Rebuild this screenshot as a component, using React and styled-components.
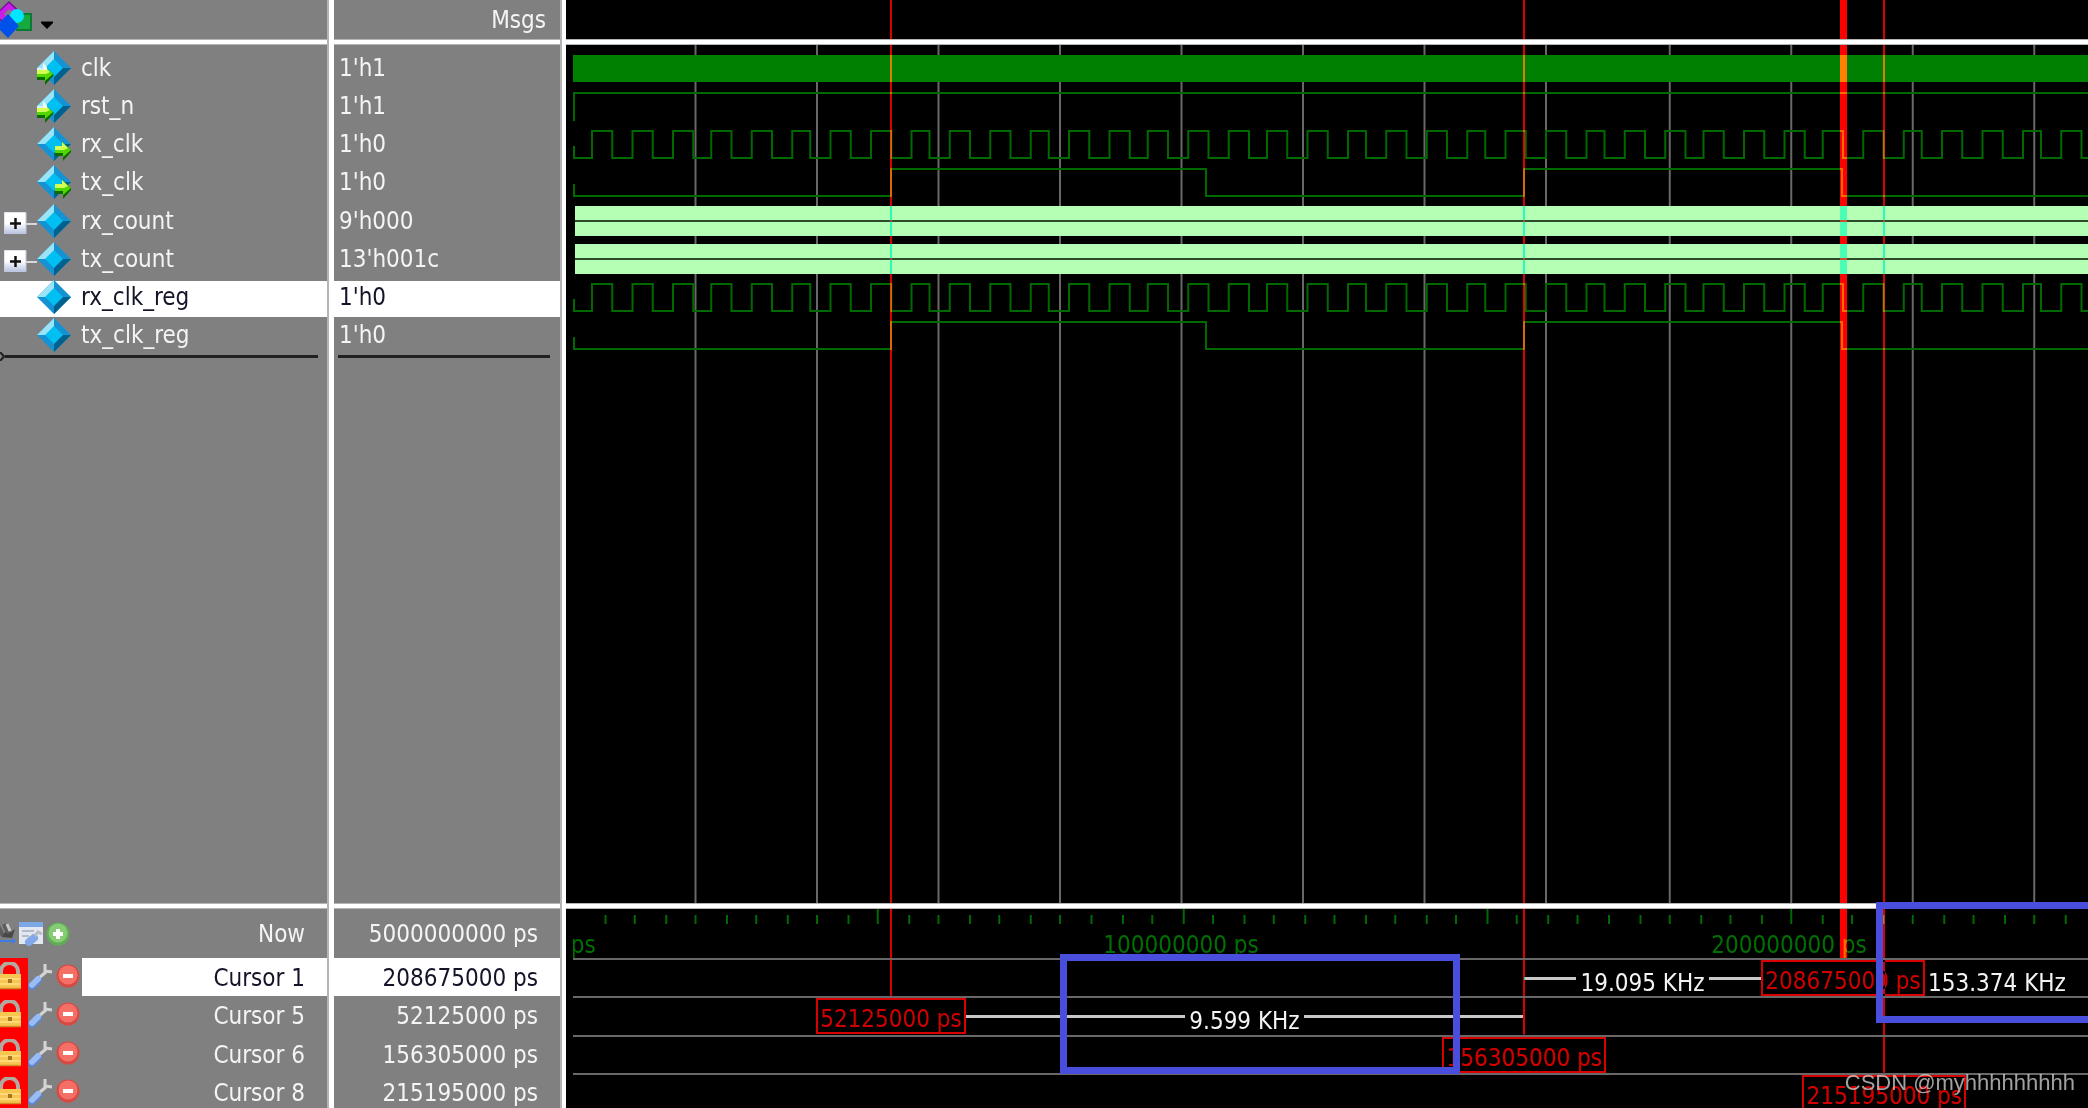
import React from "react";
import styled, { createGlobalStyle, css } from "styled-components";

const GlobalStyle = createGlobalStyle`
  * { box-sizing: border-box; }
  body { margin: 0; background: #000; }
  button { border: 0; padding: 0; background: none; font: inherit; color: inherit; display: block; cursor: pointer; }
  svg { display: block; }
`;

/* ---------- data ---------- */

const SIGNALS = [
  { name: "clk", value: "1'h1", port: "in" },
  { name: "rst_n", value: "1'h1", port: "in" },
  { name: "rx_clk", value: "1'h0", port: "out" },
  { name: "tx_clk", value: "1'h0", port: "out" },
  { name: "rx_count", value: "9'h000", bus: true },
  { name: "tx_count", value: "13'h001c", bus: true },
  { name: "rx_clk_reg", value: "1'h0", selected: true },
  { name: "tx_clk_reg", value: "1'h0" },
];

const CURSORS = [
  { name: "Cursor 1", time: "208675000 ps", x: 1270, box: 164, active: true },
  { name: "Cursor 5", time: "52125000 ps", x: 318, box: 150 },
  { name: "Cursor 6", time: "156305000 ps", x: 951, box: 164 },
  { name: "Cursor 8", time: "215195000 ps", x: 1311, box: 164 },
];

const DELTAS = {
  0: [
    { from: 951, to: 1188, text: "19.095 KHz" },
    { from: 1352, to: 1496, text: "153.374 KHz", bare: true },
  ],
  1: [{ from: 393, to: 950, text: "9.599 KHz" }],
};

/* ---------- time scale ---------- */

const DOT = 2.25;
const GRID = 54.12;
const HALF_PERIOD = 17.644 / 2;
const at = (dots) => dots * DOT;
const GRID_LINES = Array.from({ length: 40 }, (_, i) => at(Math.floor((i + 1) * GRID)));
const TICKS = Array.from({ length: 160 }, (_, i) => ({
  x: at(Math.round(((i + 1) * GRID) / 4)),
  major: (i + 1) % 10 === 0,
}));

const fastClock = (high, low) => {
  let d = `M1 ${high + 15}V${low}`;
  for (let k = 1; k < 240; k += 1) {
    const x = at(Math.floor(k * HALF_PERIOD + 0.1)) + 1;
    d += `H${x}V${k % 2 ? high : low}`;
  }
  return d;
};
const slowClock = (high, low) =>
  `M1 ${high + 15}V${low}H318V${high}H633V${low}H951V${high}H1269V${low}H4800`;

/* ---------- page frame ---------- */

const Page = styled.main`
  display: grid;
  grid-template-columns: 327px 7px 226px 6px minmax(0, 1fr);
  height: 100vh;
  min-height: 600px;
  overflow: hidden;
  position: relative;
  background: #808080;
  color: #f4f4f4;
  font: 24px/38px "DejaVu Sans Condensed", Tahoma, "Noto Sans", sans-serif;
`;

const Pane = styled.section`
  display: grid;
  grid-template-rows: 39px 6px minmax(0, 1fr) 6px 199px;
  min-width: 0;
  background: ${(p) => (p.$dark ? "#000" : "#808080")};
`;

const Splitter = styled.div`
  background: #fff;
  ${(p) =>
    p.$across
      ? css`border-top: 1px solid #b4b4b4; border-bottom: 1px solid #b4b4b4;`
      : css`border-left: 2px solid #b4b4b4;`}
`;

const PaneHead = styled.header`
  display: flex;
  align-items: center;
  justify-content: ${(p) => (p.$end ? "flex-end" : "flex-start")};
  gap: 7px;
  padding-right: 14px;
`;

const PaneBody = styled.div`
  padding-top: 5px;
  min-height: 0;
  overflow: hidden;
`;

const PaneFoot = styled.div`
  overflow: hidden;
`;

/* ---------- signal lists ---------- */

const SignalList = styled.ul`
  display: grid;
  grid-template-rows: repeat(8, minmax(0, 1fr));
  height: 306px;
  margin: 0;
  padding: 0;
  list-style: none;
`;

const SignalRow = styled.li`
  display: flex;
  align-items: center;
  padding-left: ${(p) => (p.$values ? "5px" : "4px")};
  color: ${(p) => (p.$selected ? "#141428" : "#f4f4f4")};
  background: ${(p) => (p.$selected ? "#fff" : "transparent")};
  background-clip: padding-box;
  line-height: 32px;
  padding-bottom: 3px;
  border-top: 1px solid transparent;
  border-bottom: 1px solid transparent;
`;

const TreeSlot = styled.span`
  width: 33px;
  height: 26px;
  padding-top: 4px;
`;

const SignalName = styled.span`
  margin-left: 10px;
`;

const InsertMark = styled.div`
  display: flex;
  align-items: center;
  height: 9px;
  margin: ${(p) => (p.$values ? "-4px 10px 0 4px" : "-4px 9px 0 0")};
`;

const InsertRule = styled.div`
  flex: 1;
  height: 3px;
  background: #202020;
`;

/* ---------- cursor lists ---------- */

const NowRow = styled.div`
  display: flex;
  align-items: center;
  justify-content: space-between;
  height: 49px;
  padding-right: 22px;
`;

const ToolGroup = styled.div`
  display: flex;
  align-items: center;
  gap: 2px;
`;

const CursorList = styled.ul`
  display: grid;
  grid-template-rows: repeat(4, 1fr);
  height: 153px;
  margin: 0;
  padding: 0;
  list-style: none;
`;

const CursorRow = styled.li`
  display: flex;
  align-items: stretch;
`;

const LockCell = styled.div`
  width: 28px;
  padding-top: 4px;
  background: #ff0000;
`;

const CursorTools = styled.div`
  display: flex;
  align-items: flex-start;
  gap: 3px;
  width: 54px;
  padding-top: 6px;
`;

const CursorText = styled.div`
  flex: 1;
  padding: 3px 22px 0 0;
  line-height: 35px;
  text-align: right;
  color: ${(p) => (p.$active ? "#141428" : "#f4f4f4")};
  background: ${(p) => (p.$active ? "#fff" : "transparent")};
`;

/* ---------- wave area ---------- */

const Plot = styled.div`
  position: relative;
  height: 100%;
  margin-left: 7px;
  overflow: hidden;
`;

const Drawing = styled.svg`
  position: absolute;
  inset: 0;
  width: 100%;
  height: 100%;
  mix-blend-mode: ${(p) => (p.$invert ? "difference" : "normal")};
`;

const Timeline = styled.div`
  position: relative;
  min-width: 0;
`;

const AxisLabel = styled.span`
  position: absolute;
  top: 17px;
  transform: translateX(-50%);
  white-space: nowrap;
  color: #007000;
`;

const Axis = styled.div`
  position: relative;
  height: 49px;
`;

const Tracks = styled.div`
  display: grid;
  grid-template-rows: repeat(4, 1fr);
  height: 153px;
`;

const Track = styled.div`
  position: relative;
  border-top: 2px solid #686868;
`;

const TimeBox = styled.div`
  position: absolute;
  top: 0;
  height: 36px;
  padding-top: 2px;
  border: 2px solid #d80000;
  line-height: 34px;
  text-align: center;
  white-space: nowrap;
  background: #000;
  color: #d00000;
`;

const Delta = styled.div`
  position: absolute;
  top: 0;
  display: flex;
  align-items: center;
  justify-content: center;
  gap: 4px;
  height: 36px;
  white-space: nowrap;
`;

const DeltaRule = styled.span`
  flex: 1;
  height: 3px;
  background: #c8c8c8;
`;

const DeltaText = styled.span`
  padding-top: 9px;
`;

const Highlight = styled.div`
  position: absolute;
  left: ${(p) => p.$left}px;
  top: ${(p) => p.$top}px;
  width: ${(p) => p.$width}px;
  height: ${(p) => p.$height}px;
  border: 7px solid #4a4edc;
`;

const Watermark = styled.div`
  position: absolute;
  right: 13px;
  bottom: 12px;
  font: 22px/26px "Liberation Sans", Arial, sans-serif;
  color: rgba(215, 215, 215, 0.75);
`;

/* ---------- icons ---------- */

const SignalIcon = ({ port }) => (
  <svg width="34" height="34" viewBox="0 0 34 34" aria-hidden="true">
    <path d="M17 0L34 17L17 34L0 17Z" fill="#1492d2" />
    <path d="M17 0V9L9 17H0Z" fill="#9be4f8" />
    <path d="M34 17H25L17 25V34Z" fill="#00608e" />
    <path d="M17 8L26 17L17 26L8 17Z" fill="#00bff3" />
    {port && (
      <g transform={port === "in" ? "translate(0 14)" : "translate(18 14)"}>
        <path d="M0 6H7V1L17 10L8 20V15H0Z" fill="#0c6a00" />
        <path d="M0 5H7V1L16 9L8 16V12H0Z" fill="#52d800" />
        <path d="M0 5H7V1L13 7L9 9H0Z" fill="#d2ff52" />
      </g>
    )}
    {port === "in" && <path d="M0 17H6V12L10 16V19H0Z" fill="#fff" opacity="0.85" />}
  </svg>
);

const ExpandIcon = () => (
  <svg width="33" height="22" viewBox="0 0 33 22" aria-hidden="true">
    <defs>
      <linearGradient id="expand" x1="0" y1="0" x2="0" y2="1">
        <stop offset="0.5" stopColor="#fff" />
        <stop offset="1" stopColor="#b4bfe0" />
      </linearGradient>
    </defs>
    <path d="M22 12H33" stroke="#d8d8d8" strokeWidth="2" />
    <rect width="22" height="22" rx="1" fill="url(#expand)" stroke="#c4cbe2" />
    <path d="M6 11.5H17M11.5 6V17" stroke="#111" strokeWidth="2.5" />
  </svg>
);

const LogoIcon = () => (
  <svg width="33" height="39" viewBox="0 0 33 39" aria-hidden="true">
    <path d="M-6 15L9 1L24 15L9 29Z" fill="#7a1096" />
    <path d="M-4 15L9 3L20 14L9 26Z" fill="#c81ee6" />
    <path d="M4 14L9 9L14 14L9 19Z" fill="#808080" />
    <rect x="16" y="13" width="16" height="18" fill="#0b7a32" />
    <rect x="16" y="15" width="14" height="14" fill="#17a83e" />
    <circle cx="17" cy="16" r="7" fill="#00e6ff" />
    <path d="M-4 26L8 14L19 26L8 38Z" fill="#0050ea" />
  </svg>
);

const MenuArrow = () => (
  <svg width="14" height="39" viewBox="0 0 14 39" aria-hidden="true">
    <path d="M1 21.500H13V23L7 29L1 23Z" fill="#000" />
  </svg>
);

const ClipIcon = () => (
  <svg width="17" height="24" viewBox="0 0 17 24" aria-hidden="true">
    <path d="M-3 2L3 14M4 2L9 13" stroke="#5c5c5c" strokeWidth="4" />
    <path d="M7 2L10 9" stroke="#c8c8c8" strokeWidth="3" />
    <path d="M2 15L5 10L8 12L15 7L12 16Z" fill="#484848" />
    <path d="M0 19H15" stroke="#3c7ce6" strokeWidth="2" />
    <path d="M12 16L16 19L12 22Z" fill="#3c7ce6" />
  </svg>
);

const SheetIcon = () => (
  <svg width="25" height="26" viewBox="0 0 25 26" aria-hidden="true">
    <rect y="1" width="24" height="22" fill="#e2e7f0" />
    <rect y="1" width="24" height="5" fill="#7ca8e6" />
    <path d="M3 10H15M3 15H10" stroke="#b4bccb" strokeWidth="2" />
    <path d="M10 21L15 17" stroke="#82a8ea" strokeWidth="8" strokeLinecap="round" />
    <path d="M16 15L19 11L23 13" stroke="#b8bcc4" strokeWidth="3" fill="none" />
  </svg>
);

const RoundIcon = ({ add }) => (
  <svg width="24" height="24" viewBox="0 0 24 24" aria-hidden="true">
    <circle cx="12" cy="12" r="11.500" fill={add ? "#5fae54" : "#d64a42"} />
    <circle cx="12" cy="11" r="9.500" fill={add ? "#86cc74" : "#f47066"} />
    {add ? (
      <path d="M7 12H17M12 7V17" stroke="#fff" strokeWidth="4" />
    ) : (
      <path d="M7 12H17" stroke="#fff" strokeWidth="4" />
    )}
  </svg>
);

const LockIcon = () => (
  <svg width="22" height="28" viewBox="0 0 22 28" aria-hidden="true">
    <path d="M1 13V9a8.500 8 0 0 1 17 0V13" fill="none" stroke="#b4a9a0" strokeWidth="4" />
    <rect x="-2" y="12" width="23" height="15" fill="#f7c650" />
    <path d="M-2 17H21M-2 22H21" stroke="#ffd978" strokeWidth="2" />
    <path d="M-2 26.500H21" stroke="#cf8f28" strokeWidth="1.500" />
    <rect x="8" y="17" width="4" height="4" fill="#a8761e" />
  </svg>
);

const WrenchIcon = () => (
  <svg width="25" height="28" viewBox="0 0 25 28" aria-hidden="true">
    <path d="M4 22L10 16" stroke="#5a86da" strokeWidth="8" strokeLinecap="round" />
    <path d="M4 21L10 15" stroke="#9abcf2" strokeWidth="6" strokeLinecap="round" />
    <path d="M12 13L18 8M17 0V7L24 8" stroke="#d4d4d4" strokeWidth="3" fill="none" />
  </svg>
);

/* ---------- pieces ---------- */

const CursorLines = ({ part }) => (
  <Drawing $invert aria-hidden="true">
    {CURSORS.map((c, i) => (
      <rect
        key={c.name}
        x={c.active ? c.x - 3 : c.x - 1}
        y="0"
        width={c.active ? 7 : 2}
        height={part === "time" ? 49 + i * 38.25 : "100%"}
        fill={c.active ? "#ff0000" : "#d80000"}
      />
    ))}
  </Drawing>
);

const Waves = () => (
  <Drawing aria-label="Signal waveforms" role="img">
    {GRID_LINES.map((x) => (
      <rect key={x} x={x} y="0" width="2" height="100%" fill="#686868" />
    ))}
    <rect x="0" y="10" width="100%" height="27" fill="#008000" />
    <g fill="none" stroke="#006a00" strokeWidth="2">
      <path d="M1 76V48H4800" />
      <path d={fastClock(86, 113)} />
      <path d={slowClock(124, 151)} />
      <path d={fastClock(239, 266)} />
      <path d={slowClock(277, 304)} />
    </g>
    {[161, 199].map((y) => (
      <g key={y}>
        <rect x="2" y={y} width="100%" height="30" fill="#b5ffb5" />
        <rect x="2" y={y + 14} width="100%" height="2" fill="#2c4a2c" />
      </g>
    ))}
  </Drawing>
);

export default function App() {
  return (
    <>
      <GlobalStyle />
      <Page>
        <Pane aria-label="Signals">
          <PaneHead>
            <LogoIcon />
            <button aria-label="Signal menu"><MenuArrow /></button>
          </PaneHead>
          <Splitter $across />
          <PaneBody>
            <SignalList>
              {SIGNALS.map((s) => (
                <SignalRow key={s.name} $selected={s.selected}>
                  <TreeSlot>
                    {s.bus && <button aria-label={`Expand ${s.name}`}><ExpandIcon /></button>}
                  </TreeSlot>
                  <SignalIcon port={s.port} />
                  <SignalName>{s.name}</SignalName>
                </SignalRow>
              ))}
            </SignalList>
            <InsertMark>
              <svg width="5" height="9" viewBox="0 0 5 9" aria-hidden="true">
                <path d="M0 0L4 4.500L0 9" fill="none" stroke="#202020" strokeWidth="2" />
              </svg>
              <InsertRule />
            </InsertMark>
          </PaneBody>
          <Splitter $across />
          <PaneFoot>
            <NowRow>
              <ToolGroup>
                <button aria-label="Cut"><ClipIcon /></button>
                <button aria-label="Edit grid"><SheetIcon /></button>
                <button aria-label="Add cursor"><RoundIcon add /></button>
              </ToolGroup>
              <span>Now</span>
            </NowRow>
            <CursorList>
              {CURSORS.map((c) => (
                <CursorRow key={c.name}>
                  <LockCell><button aria-label={`Lock ${c.name}`}><LockIcon /></button></LockCell>
                  <CursorTools>
                    <button aria-label={`Edit ${c.name}`}><WrenchIcon /></button>
                    <button aria-label={`Remove ${c.name}`}><RoundIcon /></button>
                  </CursorTools>
                  <CursorText $active={c.active}>{c.name}</CursorText>
                </CursorRow>
              ))}
            </CursorList>
          </PaneFoot>
        </Pane>

        <Splitter />

        <Pane aria-label="Values">
          <PaneHead $end>Msgs</PaneHead>
          <Splitter $across />
          <PaneBody>
            <SignalList>
              {SIGNALS.map((s) => (
                <SignalRow key={s.name} $values $selected={s.selected}>{s.value}</SignalRow>
              ))}
            </SignalList>
            <InsertMark $values><InsertRule /></InsertMark>
          </PaneBody>
          <Splitter $across />
          <PaneFoot>
            <NowRow><span /><span>5000000000 ps</span></NowRow>
            <CursorList>
              {CURSORS.map((c) => (
                <CursorRow key={c.name}>
                  <CursorText $active={c.active}>{c.time}</CursorText>
                </CursorRow>
              ))}
            </CursorList>
          </PaneFoot>
        </Pane>

        <Splitter />

        <Pane $dark aria-label="Waveforms">
          <Plot><CursorLines /></Plot>
          <Splitter $across />
          <Plot>
            <Waves />
            <CursorLines />
          </Plot>
          <Splitter $across />
          <Timeline>
            <Plot>
              <Axis>
                <Drawing aria-hidden="true">
                  {TICKS.map((t) => (
                    <rect key={t.x} x={t.x} y={t.major ? 0 : 6} width="2" height={t.major ? 15 : 9} fill="#006a00" />
                  ))}
                </Drawing>
                {["0 ps", "100000000 ps", "200000000 ps"].map((label, i) => (
                  <AxisLabel key={label} style={{ left: i * 608 }}>{label}</AxisLabel>
                ))}
              </Axis>
              <Tracks>
                {CURSORS.map((c, i) => (
                  <Track key={c.name}>
                    {(DELTAS[i] || []).map((d) => (
                      <Delta key={d.text} style={{ left: d.from, width: d.to - d.from }}>
                        {!d.bare && <DeltaRule />}
                        <DeltaText>{d.text}</DeltaText>
                        {!d.bare && <DeltaRule />}
                      </Delta>
                    ))}
                    <TimeBox style={{ left: c.x - c.box / 2, width: c.box }}>{c.time}</TimeBox>
                  </Track>
                ))}
              </Tracks>
              <CursorLines part="time" />
            </Plot>
            <Highlight $left={494} $top={45} $width={400} $height={120} />
            <Highlight $left={1310} $top={-7} $width={900} $height={121} />
          </Timeline>
        </Pane>
        <Watermark>CSDN @myhhhhhhhhh</Watermark>
      </Page>
    </>
  );
}
